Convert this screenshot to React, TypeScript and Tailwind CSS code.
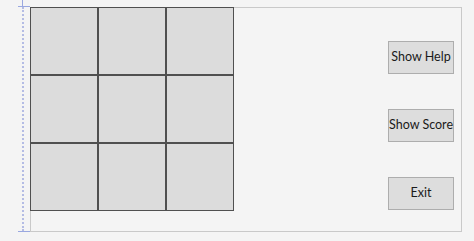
import React from "react";

const cells = Array.from({ length: 9 }, (_, i) => i);
const buttons = ["Show Help", "Show Score", "Exit"];

export default function App() {
  return (
    <div
      className="w-[474px] h-[241px] bg-[#f4f4f4] flex overflow-hidden"
      style={{ fontFamily: 'Lato, "Noto Sans", sans-serif' }}
    >
      {/* ruler column */}
      <div className="w-[30px] shrink-0 flex flex-col">
        <div className="h-[6px] ml-[22px] border-l border-[#9aa8e0]" />
        <div className="h-[1px] ml-[18px] bg-[#9aa8e0]" />
        <div className="h-[224px] ml-[22px] border-l-2 border-dotted border-[#b4bce4]" />
        <div className="h-[1px] ml-[18px] bg-[#9aa8e0]" />
      </div>

      {/* form frame */}
      <div className="mt-[7px] w-[432px] h-[225px] border border-[#c9c9c9] flex">
        <div className="flex flex-col">
          <div className="grid grid-cols-3 gap-[2px] bg-[#505050] border border-[#505050] w-[204px] h-[204px] -mt-[1px] -ml-[1px]">
            {cells.map((c) => (
              <div key={c} className="bg-[#dcdcdc]" />
            ))}
          </div>
        </div>
        <div className="flex-1" />
        <div className="flex flex-col pt-[33px] pr-[7px] gap-[35px]">
          {buttons.map((b) => (
            <button
              key={b}
              className="w-[66px] h-[33px] px-0 bg-[#dddddd] border border-[#adadad] text-[12.5px] text-[#1a1a1a] whitespace-nowrap flex items-center justify-center"
            >
              {b}
            </button>
          ))}
        </div>
      </div>
    </div>
  );
}
